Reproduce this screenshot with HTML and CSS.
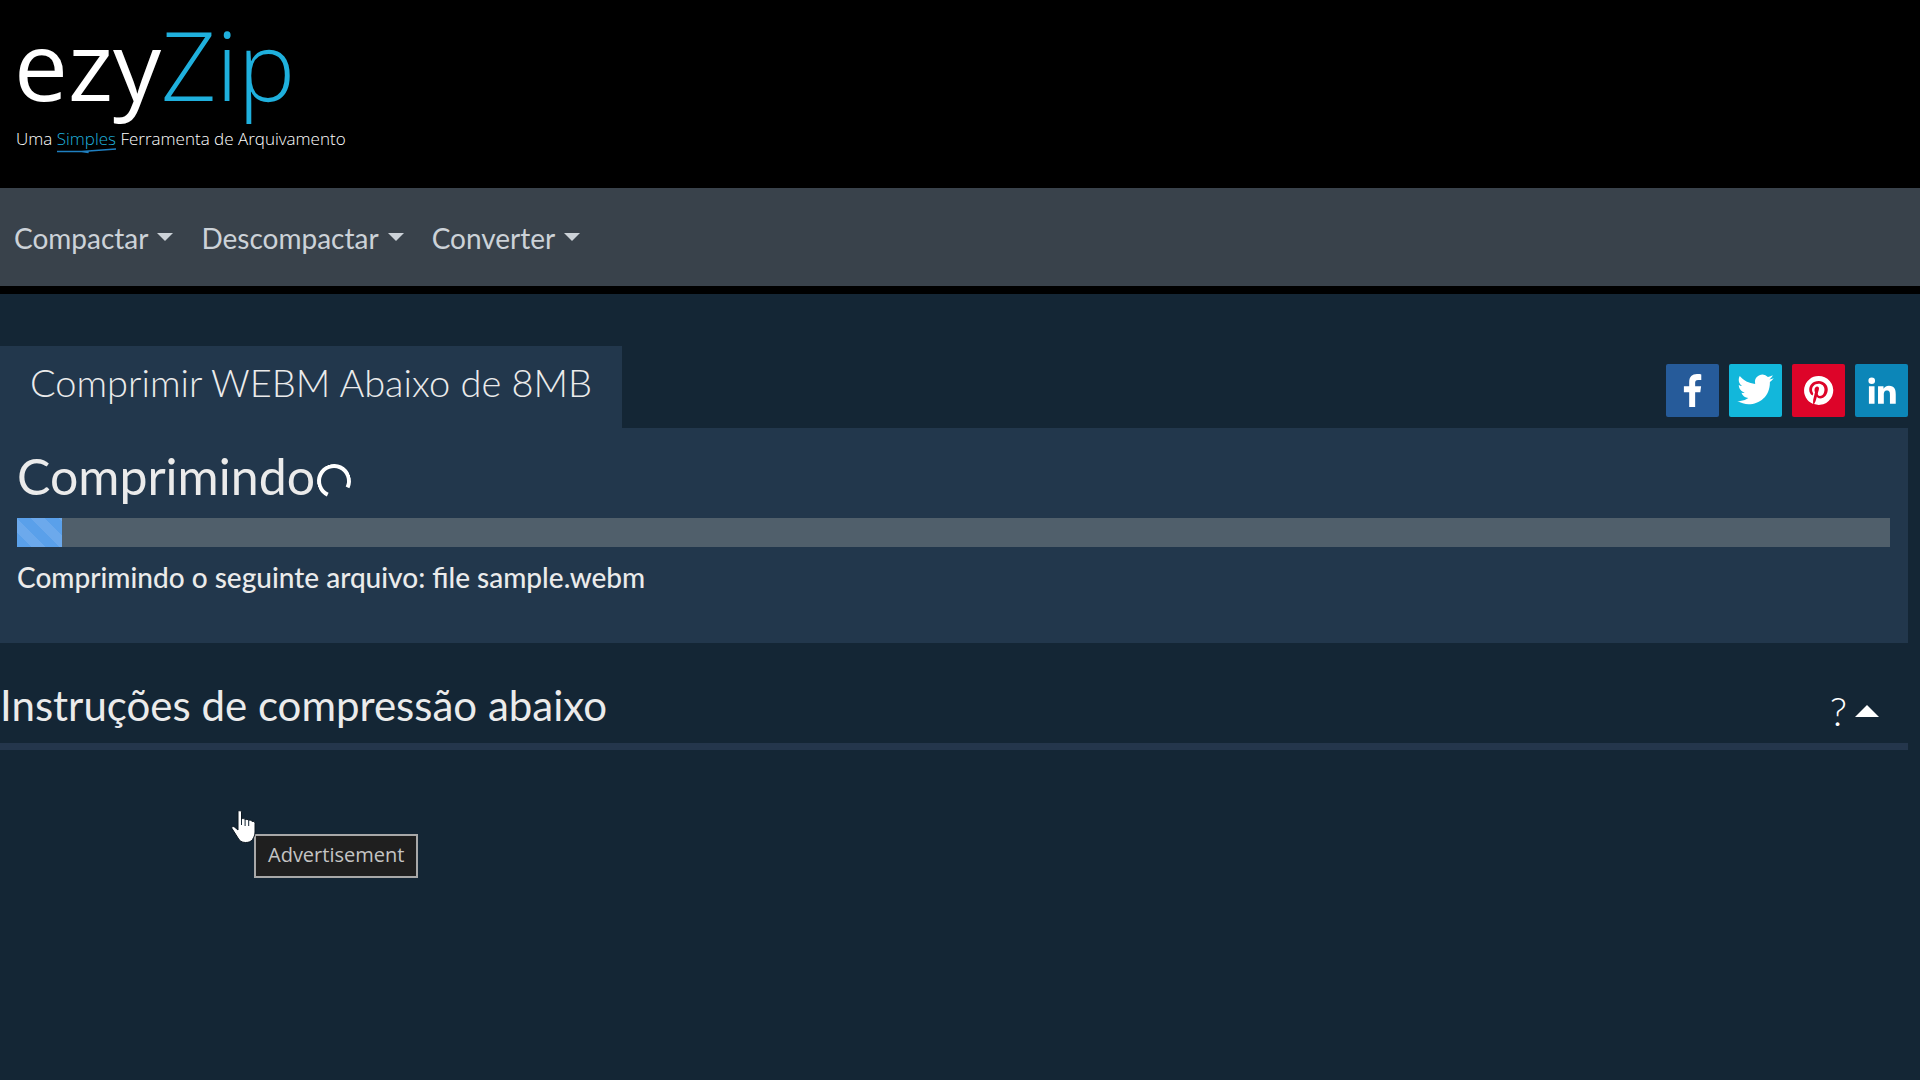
FILE: index.html
```html
<!DOCTYPE html>
<html lang="pt">
<head>
  <meta charset="UTF-8">
  <meta name="viewport" content="width=device-width, initial-scale=1.0">
  <title>Comprimir WEBM Abaixo de 8MB</title>
  <link rel="stylesheet" href="styles.css">
</head>
<body>
  <!-- Header -->
  <header class="site-header">
    <a class="logo" href="#">
      <span class="logo-name">ezy<span class="logo-zip">Zip</span></span>
      <span class="logo-tagline">Uma <span class="logo-simple">Simples<svg class="logo-underline" viewBox="0 0 60 6" preserveAspectRatio="none" aria-hidden="true"><path d="M0 3.5 L25 3.5 L60 1 M25 3.5 L32 4.5" fill="none" stroke="#1f7fc0" stroke-width="1.5"/></svg></span> Ferramenta de Arquivamento</span>
    </a>
  </header>

  <!-- Menu -->
  <nav class="navbar">
    <button class="nav-link" type="button">Compactar</button>
    <button class="nav-link" type="button">Descompactar</button>
    <button class="nav-link" type="button">Converter</button>
  </nav>

  <main class="container">
    <div class="tab-row">
      <h1 class="tab">Comprimir WEBM Abaixo de 8MB</h1>
      <div class="social">
        <a class="social-link facebook" href="#" aria-label="Facebook">
          <svg viewBox="0 0 32 32"><path d="M17.600 26V17h3.100l.5-3.500h-3.600v-2.200c0-1 .4-1.700 1.800-1.700h1.900V6.300C20.900 6.200 19.900 6.100 18.700 6.100c-2.900 0-4.700 1.700-4.700 4.800v2.600h-3.200V17H14v9z"/></svg>
        </a>
        <a class="social-link twitter" href="#" aria-label="Twitter">
          <svg viewBox="0 0 32 32"><path d="M27 8.600c-.8.400-1.700.600-2.600.700.900-.600 1.600-1.500 2-2.500-.900.500-1.800.900-2.900 1.100a4.500 4.500 0 0 0-7.700 4.100c-3.800-.200-7.100-2-9.300-4.700-1.200 2.100-.6 4.700 1.400 6-.700 0-1.400-.200-2-.600 0 2.200 1.500 4.100 3.600 4.600-.700.200-1.400.200-2 .1.600 1.800 2.200 3.100 4.200 3.100A9.100 9.100 0 0 1 5 22.400c7.900 4.700 19.800.4 19.700-11.600.900-.600 1.700-1.400 2.300-2.200z"/></svg>
        </a>
        <a class="social-link pinterest" href="#" aria-label="Pinterest">
          <svg viewBox="0 0 32 32"><path d="M16 7.300a8.700 8.700 0 0 0-3.200 16.800c-.1-.7-.1-1.700 0-2.500l1.100-4.600s-.3-.5-.3-1.300c0-1.200.7-2.100 1.600-2.100.7 0 1.100.6 1.100 1.200 0 .8-.5 1.900-.7 2.900-.2.900.4 1.600 1.300 1.600 1.500 0 2.700-1.600 2.700-3.900 0-2.100-1.500-3.500-3.600-3.500-2.400 0-3.900 1.800-3.900 3.700 0 .7.300 1.500.6 1.900l.1.300-.3 1c0 .2-.1.200-.3.100-1.100-.5-1.800-2.100-1.800-3.400 0-2.700 2-5.300 5.800-5.300 3 0 5.400 2.200 5.400 5.100 0 3-1.900 5.500-4.600 5.500-.9 0-1.700-.5-2-1l-.6 2.100c-.2.700-.7 1.700-1.100 2.300A8.700 8.700 0 1 0 16 7.300z"/></svg>
        </a>
        <a class="social-link linkedin" href="#" aria-label="LinkedIn">
          <svg viewBox="0 0 32 32"><path d="M8.400 13.400h3.400V24H8.400zM10.100 8.100a2 2 0 1 1 0 4 2 2 0 0 1 0-4zM13.900 13.400h3.300v1.500c.5-.9 1.600-1.800 3.300-1.800 3.400 0 4.100 2.200 4.100 5.100V24h-3.500v-5.200c0-1.200 0-2.800-1.700-2.800s-2 1.300-2 2.700V24h-3.500z"/></svg>
        </a>
      </div>
    </div>

    <!-- Compression progress -->
    <section class="panel">
      <h2 class="panel-title">Comprimindo<span class="spinner"></span></h2>
      <div class="progress" role="progressbar" aria-label="Comprimindo" aria-valuenow="2.4" aria-valuemin="0" aria-valuemax="100">
        <div class="progress-bar" style="width: 2.4%"></div>
      </div>
      <p class="panel-text">Comprimindo o seguinte arquivo: file sample.webm</p>
    </section>

    <section class="instructions">
      <h2 class="instructions-title">Instruções de compressão abaixo</h2>
      <button class="help-toggle" type="button">?</button>
    </section>
  </main>

  <!-- Tooltip and pointer -->
  <svg class="pointer" viewBox="0 0 25 33" aria-hidden="true">
    <path d="M7 1.500C7 .5 10.500.5 10.500 1.500V9c.6-.7 3.300-.6 3.600.7.800-.7 3-.5 3.500.8.900-.6 3-.5 3.500 1 .9-.4 2.900.1 2.900 1.800V22c0 3-1 5-2.500 7.500-1.600 2-3.500 3-7 3-4 0-6-1.800-7.500-4.500L1 18.500c-1-1.700 1.400-2.700 2.700-1.300L7 20z" fill="#fff" stroke="#0b1620" stroke-width="1"/>
    <path d="M10.500 9v6M14.100 9.700V16M17.700 10.500V16" fill="none" stroke="#142635" stroke-width="1"/>
  </svg>
  <div class="tooltip" role="tooltip">Advertisement</div>
</body>
</html>
```
FILE: styles.css
```css
/* Base */
* {
  box-sizing: border-box;
}

body {
  margin: 0;
  background-color: #142635;
  color: #ebebeb;
  font-family: 'Lato', sans-serif;
  font-size: 28px;
  overflow-x: hidden;
}

h1,
h2,
p {
  margin: 0;
}

button {
  font-family: inherit;
  border: none;
  background: none;
  cursor: pointer;
}

/* Header */
.site-header {
  min-height: 188px;
  padding: 0 14px;
  background-color: #000;
}

.logo {
  display: inline-flex;
  flex-direction: column;
  font-family: 'Open Sans', sans-serif;
  color: #fff;
  text-decoration: none;
}

.logo-name {
  font-size: 96px;
  line-height: 128px;
}

.logo-zip {
  font-weight: 300;
  color: #1fb0dd;
}

.logo-tagline {
  padding-left: 2px;
  font-size: 17px;
  font-weight: 300;
  line-height: 22px;
}

.logo-simple {
  position: relative;
  color: #1fb0dd;
}

.logo-underline {
  position: absolute;
  left: 0;
  bottom: -4px;
  width: 100%;
  height: 6px;
}

/* Menu */
.navbar {
  display: flex;
  align-items: center;
  min-height: 106px;
  background-color: #39424b;
  border-bottom: 8px solid #000;
}

.nav-link {
  padding: 10px 14px 8px;
  font-size: 28px;
  line-height: 42px;
  color: #ccd2d8;
}

.nav-link::after {
  content: "";
  display: inline-block;
  margin-left: 9px;
  vertical-align: 8px;
  border-top: 8px solid;
  border-left: 8px solid transparent;
  border-right: 8px solid transparent;
}

/* Tab and share links */
.container {
  padding: 52px 12px 0 0;
}

.tab-row {
  display: flex;
  justify-content: space-between;
  align-items: flex-end;
}

.tab {
  padding: 12px 30px 22px;
  background-color: #22374c;
  font-size: 38px;
  font-weight: 300;
  line-height: 48px;
}

.social {
  display: flex;
  gap: 10px;
  margin-bottom: 11px;
}

.social-link {
  display: block;
  width: 53px;
  height: 53px;
  border-radius: 2px;
}

.social-link svg {
  display: block;
  fill: #fff;
}

.facebook {
  background-color: #265b9a;
}

.twitter {
  background-color: #12b7db;
}

.pinterest {
  background-color: #dd0429;
}

.linkedin {
  background-color: #0c86b8;
}

/* Progress panel */
.panel {
  min-height: 215px;
  padding: 18px 18px 32px 17px;
  background-color: #22374c;
}

.panel-title {
  display: flex;
  align-items: center;
  gap: 2px;
  margin-bottom: 12px;
  font-size: 50px;
  font-weight: 400;
  line-height: 60px;
}

.spinner {
  width: 34px;
  height: 34px;
  margin-top: 10px;
  border: 4px solid #fff;
  border-radius: 50%;
  border-bottom-color: transparent;
  transform: rotate(-20deg);
}

.progress {
  height: 29px;
  background-color: #505f6b;
}

.progress-bar {
  height: 100%;
  background: repeating-linear-gradient(45deg, #5aa0ea 0 10px, #6ca9ec 10px 20px);
}

.panel-text {
  margin-top: 9px;
  font-size: 28px;
  font-weight: 500;
  line-height: 42px;
}

/* Instructions */
.instructions {
  display: flex;
  justify-content: space-between;
  align-items: center;
  margin-top: 32px;
  padding-bottom: 8px;
  border-bottom: 7px solid #24364c;
}

.instructions-title {
  font-size: 42px;
  font-weight: 400;
  line-height: 60px;
}

.help-toggle {
  display: flex;
  align-items: center;
  gap: 8px;
  margin-right: 29px;
  padding: 12px 0 0;
  font-size: 40px;
  font-weight: 300;
  line-height: 48px;
  color: #fff;
}

.help-toggle::after {
  content: "";
  border-bottom: 12px solid;
  border-left: 12px solid transparent;
  border-right: 12px solid transparent;
}

/* Tooltip and pointer */
.tooltip {
  position: absolute;
  left: 254px;
  top: 834px;
  padding: 5px 12px 7px;
  border: 2px solid #a8a8a8;
  background-color: #1f1f1f;
  color: #c4c4c4;
  font-family: 'Open Sans', sans-serif;
  font-size: 20px;
  line-height: 28px;
}

.pointer {
  position: absolute;
  left: 231px;
  top: 810px;
  width: 25px;
  height: 33px;
  z-index: 1;
}
```
